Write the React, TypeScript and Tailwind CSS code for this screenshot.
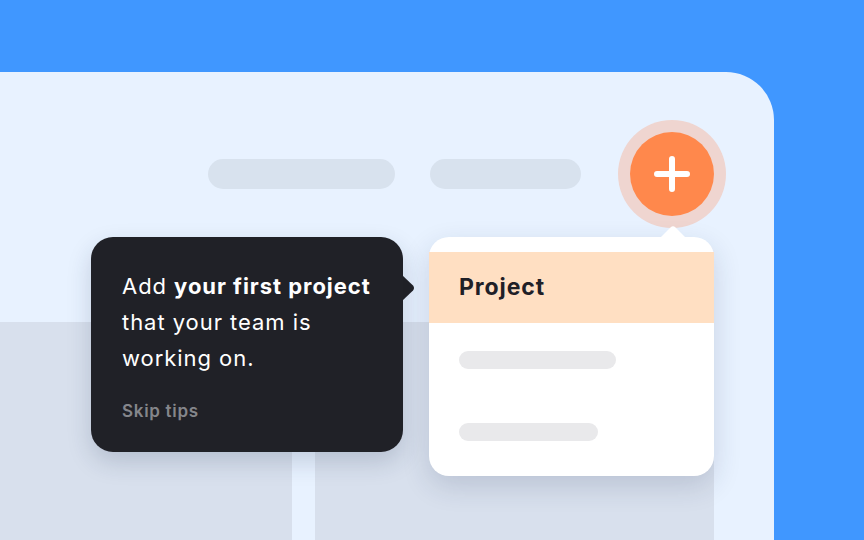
import React from "react";

export default function App() {
  return (
    <div
      className="w-[864px] h-[540px] overflow-hidden bg-[#4097ff] pt-[72px]"
      style={{ fontFamily: "Inter, 'Noto Sans', sans-serif" }}
    >
      <div className="relative w-[774px] h-[468px] bg-[#e8f2ff] rounded-tr-[48px] flex flex-col">
        {/* top bar */}
        <div className="h-[250px] flex items-start">
          <div className="ml-[208px] mt-[87px] w-[187px] h-[30px] rounded-full bg-[#d8e2ee]" />
          <div className="ml-[35px] mt-[87px] w-[151px] h-[30px] rounded-full bg-[#d8e2ee]" />
          <div className="ml-[37px] mt-[48px] w-[108px] h-[108px] rounded-full bg-[#efd5d0] flex items-center justify-center">
            <div className="w-[84px] h-[84px] rounded-full bg-[#ff884c] flex items-center justify-center">
              <svg width="36" height="36" viewBox="0 0 36 36">
                <path d="M18 3V33M3 18H33" stroke="#fff" strokeWidth="6" strokeLinecap="round" />
              </svg>
            </div>
          </div>
        </div>
        {/* lower area */}
        <div className="flex-1 flex">
          <div className="w-[292px] bg-[#d8e0ed]" />
          <div className="w-[23px]" />
          <div className="w-[399px] bg-[#d8e0ed]" />
        </div>

        {/* tooltip */}
        <div className="absolute left-[91px] top-[165px] w-[312px] h-[215px] rounded-[22px] bg-[#202127] pl-[31px] pt-[31px] shadow-[0_10px_24px_rgba(30,45,80,0.18)]">
          <div className="text-[22px] leading-[36px] text-white tracking-[0.95px] whitespace-nowrap">
            Add <span className="font-bold">your first project</span>
            <br />
            that your team is
            <br />
            working on.
          </div>
          <div className="mt-[23px] text-[17px] leading-[24px] font-semibold text-[#85868b] tracking-[0.7px]">
            Skip tips
          </div>
          <svg className="absolute left-[311px] top-[38px]" width="14" height="26" viewBox="0 0 14 26">
            <path d="M0 0 L11 10.5 Q13 13 11 15.5 L0 26 Z" fill="#202127" />
          </svg>
        </div>

        {/* dropdown */}
        <div className="absolute left-[429px] top-[165px] w-[285px] h-[239px] rounded-[20px] bg-white pt-[15px] shadow-[0_10px_28px_rgba(30,45,80,0.16)]">
          <svg className="absolute left-[231px] top-[-11px]" width="26" height="12" viewBox="0 0 26 12">
            <path d="M0 12 L10.5 1.5 Q13 -0.8 15.5 1.5 L26 12 Z" fill="#ffffff" />
          </svg>
          <div className="h-[71px] bg-[#ffdfc2] flex items-center pl-[30px]">
            <span className="text-[23px] font-bold text-[#1f2027] tracking-[0.9px]">Project</span>
          </div>
          <div className="mt-[28px] ml-[30px] w-[157px] h-[18px] rounded-full bg-[#e9e9eb]" />
          <div className="mt-[54px] ml-[30px] w-[139px] h-[18px] rounded-full bg-[#e9e9eb]" />
        </div>
      </div>
    </div>
  );
}
